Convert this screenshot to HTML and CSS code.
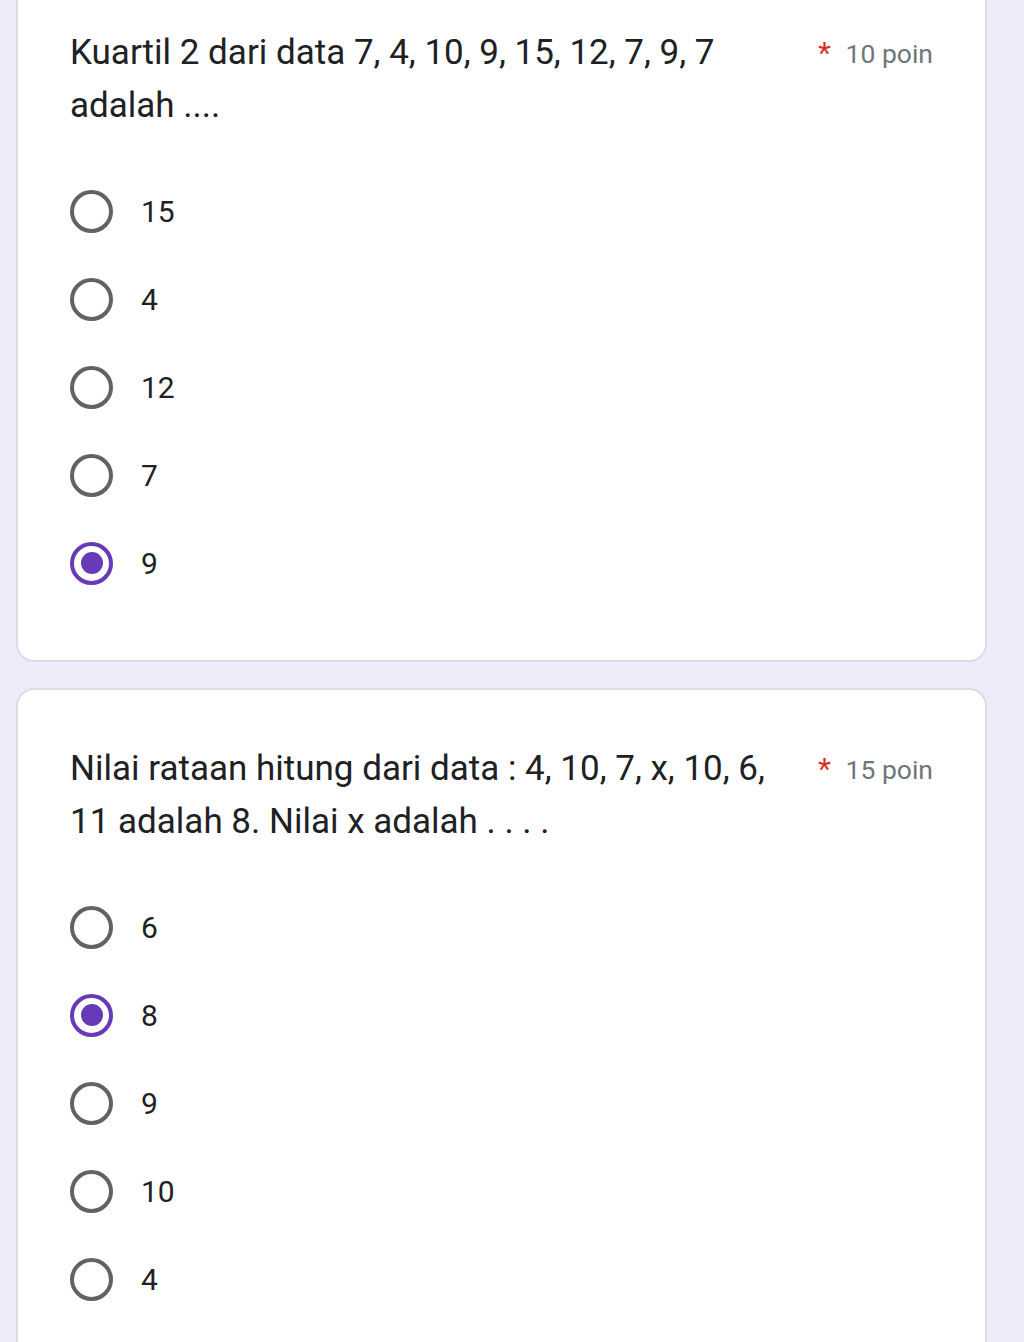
FILE: index.html
```html
<!DOCTYPE html>
<html lang="id">
  <head>
    <meta charset="UTF-8" />
    <meta name="viewport" content="width=device-width, initial-scale=1.0" />
    <title>Kuis Statistika</title>
    <link rel="stylesheet" href="styles.css">
  </head>
  <body>
    <div class="form">
      <div class="card first">
        <div class="question-head">
          <div class="title">Kuartil 2 dari data 7, 4, 10, 9, 15, 12, 7, 9, 7 adalah ....</div>
          <div class="points"><span class="required">*</span> 10 poin</div>
        </div>
        <div class="options">
          <label class="option"><span class="radio"></span><span class="label">15</span></label>
          <label class="option"><span class="radio"></span><span class="label">4</span></label>
          <label class="option"><span class="radio"></span><span class="label">12</span></label>
          <label class="option"><span class="radio"></span><span class="label">7</span></label>
          <label class="option"><span class="radio checked"></span><span class="label">9</span></label>
        </div>
      </div>

      <div class="card">
        <div class="question-head">
          <div class="title">Nilai rataan hitung dari data : 4, 10, 7, x, 10, 6, 11 adalah 8. Nilai x adalah . . . .</div>
          <div class="points"><span class="required">*</span> 15 poin</div>
        </div>
        <div class="options">
          <label class="option"><span class="radio"></span><span class="label">6</span></label>
          <label class="option"><span class="radio checked"></span><span class="label">8</span></label>
          <label class="option"><span class="radio"></span><span class="label">9</span></label>
          <label class="option"><span class="radio"></span><span class="label">10</span></label>
          <label class="option"><span class="radio"></span><span class="label">4</span></label>
        </div>
      </div>
    </div>
  </body>
</html>
```

FILE: styles.css
```css
body {
  margin: 0;
  background: #eeebfb;
  font-family: Roboto, "Liberation Sans", Arial, sans-serif;
  color: #202124;
  overflow: hidden;
}
.form {
  display: flex;
  flex-direction: column;
  gap: 26px;
  padding: 0 37px 0 16px;
}
.card {
  background: white;
  border: 2px solid #dedbe8;
  border-radius: 18px;
  padding: 53px 52px 53px 52px;
}
.card.first {
  margin-top: -28px;
}
.question-head {
  display: flex;
  align-items: flex-start;
}
.title {
  flex: 1;
  font-size: 35px;
  line-height: 52.5px;
  margin-right: 30px;
}
.points {
  font-size: 26.5px;
  line-height: 52px;
  color: #70757a;
  white-space: nowrap;
}
.required {
  color: #d93025;
  font-size: 30px;
  margin-right: 8px;
}
.options {
  margin-top: 35px;
  display: flex;
  flex-direction: column;
}
.option {
  display: flex;
  align-items: center;
  height: 88px;
}
.radio {
  box-sizing: border-box;
  width: 43px;
  height: 43px;
  border: 4px solid #5f6368;
  border-radius: 50%;
  display: flex;
  align-items: center;
  justify-content: center;
}
.radio.checked {
  border-color: #673ab7;
}
.radio.checked::after {
  content: "";
  width: 22px;
  height: 22px;
  border-radius: 50%;
  background: #673ab7;
}
.label {
  margin-left: 28px;
  font-size: 30px;
}
```
